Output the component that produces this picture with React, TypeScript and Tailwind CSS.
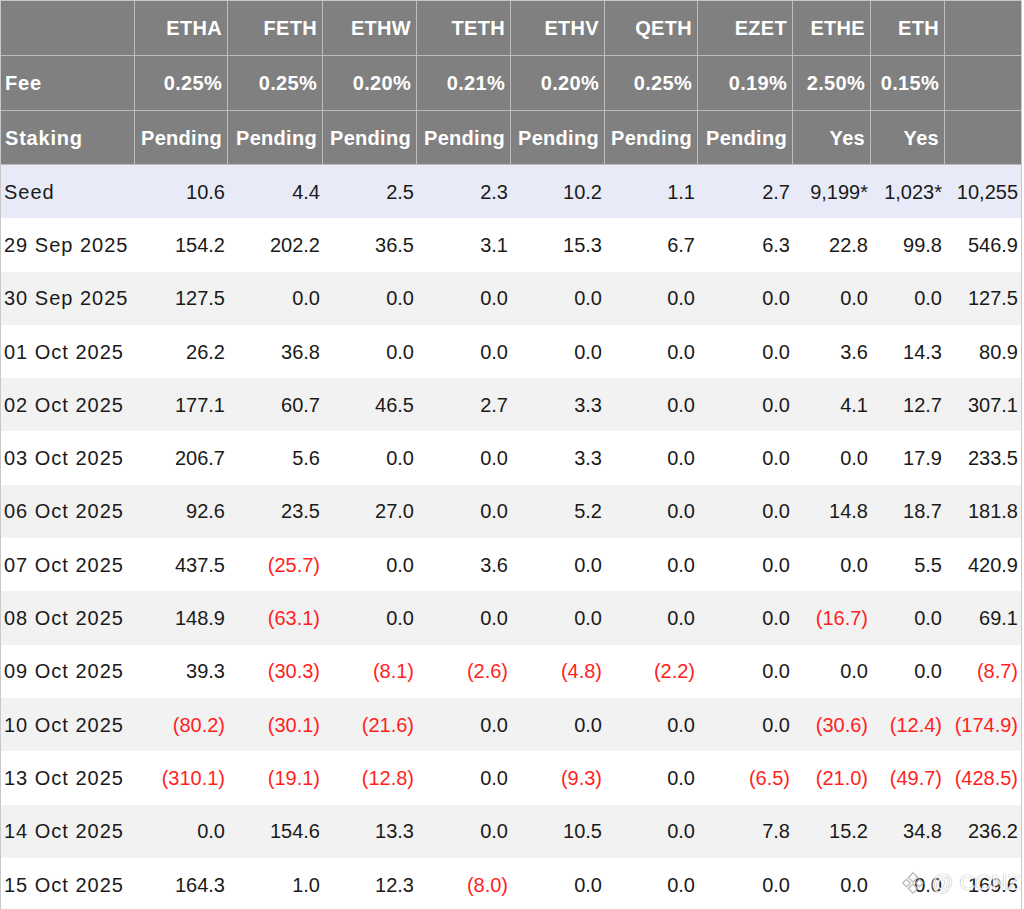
import React from 'react';

const COLS = ['ETHA', 'FETH', 'ETHW', 'TETH', 'ETHV', 'QETH', 'EZET', 'ETHE', 'ETH', ''];
const FEES = ['0.25%', '0.25%', '0.20%', '0.21%', '0.20%', '0.25%', '0.19%', '2.50%', '0.15%', ''];
const STAKING = ['Pending', 'Pending', 'Pending', 'Pending', 'Pending', 'Pending', 'Pending', 'Yes', 'Yes', ''];

const ROWS: [string, string[]][] = [
  ['Seed', ['10.6', '4.4', '2.5', '2.3', '10.2', '1.1', '2.7', '9,199*', '1,023*', '10,255']],
  ['29 Sep 2025', ['154.2', '202.2', '36.5', '3.1', '15.3', '6.7', '6.3', '22.8', '99.8', '546.9']],
  ['30 Sep 2025', ['127.5', '0.0', '0.0', '0.0', '0.0', '0.0', '0.0', '0.0', '0.0', '127.5']],
  ['01 Oct 2025', ['26.2', '36.8', '0.0', '0.0', '0.0', '0.0', '0.0', '3.6', '14.3', '80.9']],
  ['02 Oct 2025', ['177.1', '60.7', '46.5', '2.7', '3.3', '0.0', '0.0', '4.1', '12.7', '307.1']],
  ['03 Oct 2025', ['206.7', '5.6', '0.0', '0.0', '3.3', '0.0', '0.0', '0.0', '17.9', '233.5']],
  ['06 Oct 2025', ['92.6', '23.5', '27.0', '0.0', '5.2', '0.0', '0.0', '14.8', '18.7', '181.8']],
  ['07 Oct 2025', ['437.5', '(25.7)', '0.0', '3.6', '0.0', '0.0', '0.0', '0.0', '5.5', '420.9']],
  ['08 Oct 2025', ['148.9', '(63.1)', '0.0', '0.0', '0.0', '0.0', '0.0', '(16.7)', '0.0', '69.1']],
  ['09 Oct 2025', ['39.3', '(30.3)', '(8.1)', '(2.6)', '(4.8)', '(2.2)', '0.0', '0.0', '0.0', '(8.7)']],
  ['10 Oct 2025', ['(80.2)', '(30.1)', '(21.6)', '0.0', '0.0', '0.0', '0.0', '(30.6)', '(12.4)', '(174.9)']],
  ['13 Oct 2025', ['(310.1)', '(19.1)', '(12.8)', '0.0', '(9.3)', '0.0', '(6.5)', '(21.0)', '(49.7)', '(428.5)']],
  ['14 Oct 2025', ['0.0', '154.6', '13.3', '0.0', '10.5', '0.0', '7.8', '15.2', '34.8', '236.2']],
  ['15 Oct 2025', ['164.3', '1.0', '12.3', '(8.0)', '0.0', '0.0', '0.0', '0.0', '0.0', '169.6']],
];

const GRID = 'grid grid-cols-[134px_93px_95px_94px_94px_94px_93px_95px_78px_74px_76px]';

function HeaderRow({ label, cells, h }: { label: string; cells: string[]; h: string }) {
  return (
    <div className={`${GRID} ${h} bg-[#808080] border-b border-[#bcbcbc] text-white font-bold`}>
      <div className="flex items-center pl-[4px] tracking-[0.8px] border-r border-[#bcbcbc]">{label}</div>
      {cells.map((c, i) => (
        <div
          key={i}
          className={`flex items-center justify-end pr-[5px] tracking-[0.3px] ${i < cells.length - 1 ? 'border-r border-[#bcbcbc]' : ''}`}
        >
          {c}
        </div>
      ))}
    </div>
  );
}

export default function App() {
  return (
    <div className="w-[1024px] h-[909px] overflow-hidden bg-white font-['Liberation_Sans',Arial,sans-serif] text-[20px] leading-none">
      <div className="relative w-[1022px] border-l border-r border-t border-[#c8c8c8]">
        <HeaderRow label="" cells={COLS} h="h-[55px]" />
        <HeaderRow label="Fee" cells={FEES} h="h-[55px]" />
        <HeaderRow label="Staking" cells={STAKING} h="h-[54px]" />
        {ROWS.map(([label, vals], r) => {
          const bg = r === 0 ? 'bg-[#e8ebf7]' : r % 2 === 0 ? 'bg-[#f2f2f2]' : 'bg-white';
          return (
            <div key={label} className={`${GRID} h-[53.3px] ${bg} text-[#1a1a1a]`}>
              <div className="flex items-center pl-[3px] tracking-[1px]">{label}</div>
              {vals.map((v, i) => (
                <div
                  key={i}
                  className={`flex items-center justify-end pr-[3px] ${v.startsWith('(') ? 'text-[#ff1f1f]' : ''}`}
                >
                  {v}
                </div>
              ))}
            </div>
          );
        })}

        {/* watermark */}
        <div className="absolute left-[900px] top-[870px] flex items-center gap-[6px] text-[22px] text-white opacity-80 [text-shadow:0_0_1px_#9a9a9a,0_0_1px_#9a9a9a]">
          <svg width="24" height="24" viewBox="0 0 26 26" fill="none" stroke="#b0b0b0" strokeWidth="1.6">
            <path d="M13 2 L18 7 L13 12 L8 7 Z" fill="white" />
            <path d="M6 9 L10 13 L6 17 L2 13 Z" fill="white" />
            <path d="M20 9 L24 13 L20 17 L16 13 Z" fill="white" />
            <path d="M13 14 L18 19 L13 24 L8 19 Z" fill="white" />
          </svg>
          <span>@ CCNZ</span>
        </div>
      </div>
    </div>
  );
}
